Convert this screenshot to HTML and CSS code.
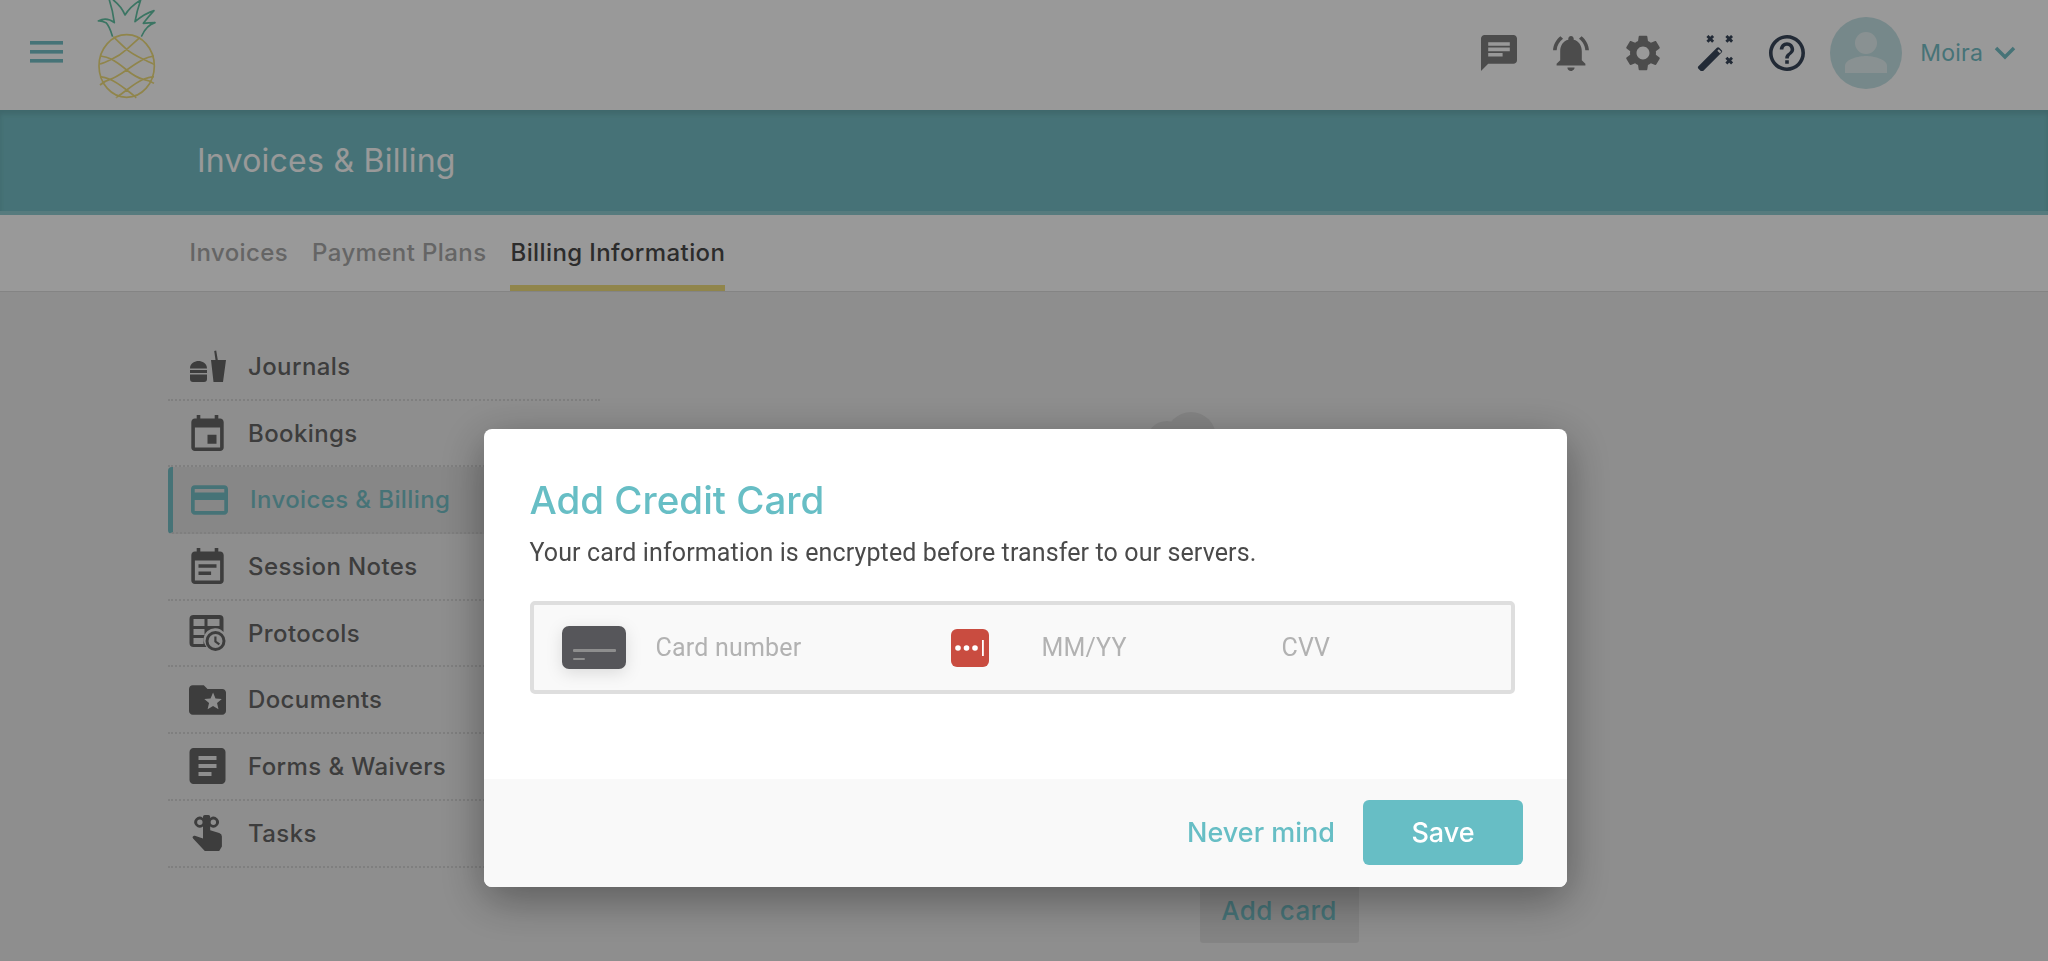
FILE: index.html
```html
<!DOCTYPE html>
<html lang="en">
<head>
<meta charset="utf-8">
<title>Invoices &amp; Billing</title>
<link rel="stylesheet" href="styles.css">
</head>
<body>
<div class="page">
  <header class="topbar">
    <div class="brand">
      <svg class="menu-icon" viewBox="0 0 33 22"><rect width="33" height="3.6" y="0"/><rect width="33" height="3.6" y="9"/><rect width="33" height="3.6" y="18"/></svg>
      <svg class="logo" viewBox="0 0 270 315">
        <path class="logo-crown" d="M97 108Q88 78 78 68Q65 62 55 63Q80 50 103 68Q98 30 88 0M100 0Q125 20 135 45Q150 20 182 0Q170 35 165 65Q195 40 222 32Q205 50 190 70Q205 68 225 68Q200 75 185 108"/>
        <g class="logo-fruit"><ellipse cx="140" cy="198" rx="83" ry="94"/><path d="M100 110Q125 135 140 148T190 178T222 192M62 168Q80 170 95 178T140 210T190 238T222 250M60 230Q75 232 90 238T140 270T165 292M180 112Q160 130 140 148T95 178T60 192M222 168Q205 170 190 178T140 210T90 238T60 255M222 230Q205 232 190 238T140 270T110 292"/></g>
      </svg>
    </div>
    <nav class="top-actions">
      <svg class="act act-dark" viewBox="2 2 20 20"><path d="M20 2H4c-1.1 0-1.99.9-1.99 2L2 22l4-4h14c1.1 0 2-.9 2-2V4c0-1.1-.9-2-2-2zM6 9h12v2H6V9zm8 5H6v-2h8v2zm4-6H6V6h12v2z"/></svg>
      <svg class="act act-dark" viewBox="2 2 20 20"><path d="M7.58 4.08L6.15 2.65C3.75 4.48 2.17 7.3 2.03 10.5h2c.15-2.65 1.51-4.97 3.55-6.42zm12.39 6.42h2c-.15-3.2-1.73-6.02-4.12-7.85l-1.42 1.43c2.02 1.45 3.39 3.77 3.54 6.42zM18 11c0-3.07-1.64-5.64-4.5-6.32V4c0-.83-.67-1.5-1.5-1.5s-1.5.67-1.5 1.5v.68C7.63 5.36 6 7.92 6 11v5l-2 2v1h16v-1l-2-2v-5zm-6 11c.14 0 .27-.01.4-.04.65-.14 1.18-.58 1.44-1.18.1-.24.15-.5.15-.78h-4c.01 1.1.9 2 2.01 2z"/></svg>
      <svg class="act act-dark" viewBox="2.5 2 19 20"><path d="M19.14 12.94c.04-.3.06-.61.06-.94 0-.32-.02-.64-.07-.94l2.03-1.58c.18-.14.23-.41.12-.61l-1.92-3.32c-.12-.22-.37-.29-.59-.22l-2.39.96c-.5-.38-1.03-.7-1.62-.94l-.36-2.54c-.04-.24-.24-.41-.48-.41h-3.84c-.24 0-.43.17-.47.41l-.36 2.54c-.59.24-1.13.57-1.62.94l-2.39-.96c-.22-.08-.47 0-.59.22L2.74 8.87c-.12.21-.08.47.12.61l2.03 1.58c-.05.3-.09.63-.09.94s.02.64.07.94l-2.03 1.58c-.18.14-.23.41-.12.61l1.92 3.32c.12.22.37.29.59.22l2.39-.96c.5.38 1.03.7 1.62.94l.36 2.54c.05.24.24.41.48.41h3.84c.24 0 .44-.17.47-.41l.36-2.54c.59-.24 1.13-.56 1.62-.94l2.39.96c.22.08.47 0 .59-.22l1.92-3.32c.12-.22.07-.47-.12-.61l-2.01-1.58zM12 15.6c-1.98 0-3.6-1.62-3.6-3.6s1.62-3.6 3.6-3.6 3.6 1.62 3.6 3.6-1.62 3.6-3.6 3.6z"/></svg>
      <svg class="act act-navy" viewBox="0 0 38 38"><path d="M1.5 33 21 13.5a1.8 1.8 0 0 1 2.5 0l2.5 2.5a1.8 1.8 0 0 1 0 2.5L6.5 38a1.8 1.8 0 0 1-2.5 0L1.500 35.500a1.800 1.800 0 0 1 0-2.500zM21.500 16.500l2.700 2.700 1.500-1.500-2.700-2.700z" fill-rule="evenodd"/><path class="spark" d="M11 1l6 6m0-6-6 6M31 1l6 6m0-6-6 6M31 24l6 6m0-6-6 6"/></svg>
      <svg class="act act-navy" viewBox="2 2 20 20"><path d="M11 18h2v-2h-2v2zm1-16C6.48 2 2 6.48 2 12s4.48 10 10 10 10-4.48 10-10S17.52 2 12 2zm0 18c-4.41 0-8-3.59-8-8s3.59-8 8-8 8 3.59 8 8-3.59 8-8 8zm0-14c-2.21 0-4 1.790-4 4h2c0-1.100.9-2 2-2s2 .9 2 2c0 2-3 1.750-3 5h2c0-2.250 3-2.500 3-5 0-2.210-1.790-4-4-4z"/></svg>
      <div class="user">
        <svg class="avatar" viewBox="0 0 72 72"><circle class="avatar-bg" cx="36" cy="36" r="36"/><circle class="avatar-fg" cx="36" cy="26" r="11"/><path class="avatar-fg" d="M15 56v-7c0-7 14-10 21-10s21 3 21 10v7z"/></svg>
        <span class="user-name">Moira</span>
        <svg class="chev" viewBox="0 0 22 14"><path d="M2 2l9 9 9-9"/></svg>
      </div>
    </nav>
  </header>

  <div class="banner"><h1 class="banner-title">Invoices &amp; Billing</h1></div>

  <nav class="tabs">
    <a class="tab">Invoices</a>
    <a class="tab">Payment Plans</a>
    <a class="tab tab-active">Billing Information</a>
  </nav>

  <main class="main">
    <ul class="side">
      <li class="side-item">
        <svg class="side-icon" viewBox="0 0 37 32"><path d="M1 18.500C1 13 6 11 9.500 11S18 13 18 18.500zM1 20h17v3H1zM1 24.500h17V29a3 3 0 0 1-3 3H4a3 3 0 0 1-3-3z"/><path d="M22 10h4.500L25.200 1l2-.5L28.800 10H37l-3 22h-9.500z"/></svg>
        <span>Journals</span>
      </li>
      <li class="side-item">
        <svg class="side-icon" viewBox="3 1 18 20"><path d="M17 12h-5v5h5v-5zM16 1v2H8V1H6v2H5c-1.110 0-1.990.9-1.990 2L3 19c0 1.100.89 2 2 2h14c1.100 0 2-.9 2-2V5c0-1.100-.9-2-2-2h-1V1h-2zm3 18H5V8h14v11z"/></svg>
        <span>Bookings</span>
      </li>
      <li class="side-item side-active">
        <svg class="side-icon" viewBox="2 4 20 16"><path d="M20 4H4c-1.110 0-1.990.89-1.990 2L2 18c0 1.110.89 2 2 2h16c1.110 0 2-.89 2-2V6c0-1.110-.89-2-2-2zm0 14H4v-6h16v6zm0-10H4V6h16v2z"/></svg>
        <span>Invoices &amp; Billing</span>
      </li>
      <li class="side-item">
        <svg class="side-icon" viewBox="3 1 18 20"><path d="M17 10H7v2h10v-2zm2-7h-1V1h-2v2H8V1H6v2H5c-1.110 0-1.990.9-1.990 2L3 19c0 1.100.89 2 2 2h14c1.100 0 2-.9 2-2V5c0-1.100-.9-2-2-2zm0 16H5V8h14v11zm-5-5H7v2h7v-2z"/></svg>
        <span>Session Notes</span>
      </li>
      <li class="side-item">
        <svg class="side-icon" viewBox="0 0 36 36"><path fill-rule="evenodd" d="M4 0h26a4 4 0 0 1 4 4v13a11 11 0 0 0-17 15H4a4 4 0 0 1-4-4V4a4 4 0 0 1 4-4zM4 4v7h11V4zM18 4v7h12V4zM4 14v6h11v-6zM4 23v6h10v-6z"/><path fill-rule="evenodd" d="M26 16a10 10 0 1 1 0 20 10 10 0 0 1 0-20zm0 3a7 7 0 1 0 0 14 7 7 0 0 0 0-14zm-1.200 2.500h2.200V26l3.500 2.500-1.300 1.700-4.400-3.200z"/></svg>
        <span>Protocols</span>
      </li>
      <li class="side-item">
        <svg class="side-icon" viewBox="2 4 20 16"><path d="M20 6h-8l-2-2H4c-1.100 0-1.990.9-1.990 2L2 18c0 1.100.9 2 2 2h16c1.100 0 2-.9 2-2V8c0-1.100-.9-2-2-2zm-2.060 11L15 15.280 12.060 17l.78-3.330-2.590-2.240 3.410-.29L15 8l1.340 3.140 3.410.29-2.590 2.240.78 3.330z"/></svg>
        <span>Documents</span>
      </li>
      <li class="side-item">
        <svg class="side-icon" viewBox="3 3 18 18"><path d="M19 3H5c-1.100 0-2 .9-2 2v14c0 1.100.9 2 2 2h14c1.100 0 2-.9 2-2V5c0-1.100-.9-2-2-2zm-5 14H7.500v-2H14v2zm2.500-4h-9v-2h9v2zm0-4h-9V7h9v2z"/></svg>
        <span>Forms &amp; Waivers</span>
      </li>
      <li class="side-item">
        <svg class="side-icon" viewBox="0 0 34 40"><path fill-rule="evenodd" d="M14 0h4a2 2 0 0 1 2 2v1.200a6 6 0 1 1 0 9.600V17l10 3a4 4 0 0 1 3 4v11l-3 5H14L1 26c-1.500-1.500 0-3 2-3l9 3V12.800a6 6 0 1 1 0-9.600V2a2 2 0 0 1 2-2zM8.500 5a3 3 0 1 0 0 6 3 3 0 0 0 0-6zm15 0a3 3 0 1 0 0 6 3 3 0 0 0 0-6z"/></svg>
        <span>Tasks</span>
      </li>
    </ul>
    <section class="content">
      <svg class="cloud" viewBox="0 0 260 180"><circle cx="18" cy="30" r="21"/><circle cx="42" cy="25" r="25"/><rect y="20" width="260" height="160"/></svg>
      <button class="add-card">Add card</button>
    </section>
  </main>
</div>

<div class="overlay">
  <div class="modal">
    <div class="modal-body">
      <h2 class="modal-title">Add Credit Card</h2>
      <p class="modal-text">Your card information is encrypted before transfer to our servers.</p>
      <div class="card-field">
        <svg class="card-icon" viewBox="0 0 64 43"><rect class="card-bg" width="64" height="43" rx="7"/><rect class="card-line" x="11" y="23" width="43" height="3" rx="1"/><rect class="card-line" x="11" y="32" width="12" height="2" rx="1"/></svg>
        <span class="ph ph-number">Card number</span>
        <svg class="lp-icon" viewBox="0 0 38 38"><rect class="lp-bg" width="38" height="38" rx="6"/><circle class="lp-dot" cx="7" cy="19" r="2.800"/><circle class="lp-dot" cx="15.500" cy="19" r="2.800"/><circle class="lp-dot" cx="24" cy="19" r="2.800"/><rect class="lp-dot" x="31" y="11" width="1.800" height="16"/></svg>
        <span class="ph ph-exp">MM/YY</span>
        <span class="ph ph-cvv">CVV</span>
      </div>
    </div>
    <div class="modal-foot">
      <button class="btn-link">Never mind</button>
      <button class="btn-save">Save</button>
    </div>
  </div>
</div>
</body>
</html>
```
FILE: styles.css
```css
* { box-sizing: border-box; }
html, body { margin: 0; height: 961px; overflow: hidden; }
body { background: #ededed; font-family: "Inter", "Liberation Sans", sans-serif; }
.page { height: 961px; overflow: hidden; display: flex; flex-direction: column; }

.topbar { height: 110px; flex: none; background: #fff; display: flex; justify-content: space-between; align-items: center; padding: 0 32px 0 30px; }
.brand { display: flex; align-items: center; gap: 37px; height: 110px; }
.menu-icon { width: 33px; height: 22px; fill: #75c0c7; margin-top: -6px; }
.logo { width: 90px; height: 105px; margin: -5px 0 0 -20px; }
.logo-crown { fill: none; stroke: #63c3a5; stroke-width: 5; stroke-linejoin: round; stroke-linecap: round; }
.logo-fruit { fill: none; stroke: #f0de7d; stroke-width: 5; }
.top-actions { display: flex; align-items: center; margin-top: -5px; }
.act { width: 36px; height: 36px; margin-right: 36px; }
.act-dark { fill: #7f7f7f; }
.act-navy { fill: #39475a; }
.spark { fill: none; stroke: #39475a; stroke-width: 3; }
.user { display: flex; align-items: center; margin-left: -11px; }
.avatar { width: 72px; height: 72px; }
.avatar-bg { fill: #c5e3e6; }
.avatar-fg { fill: #fff; opacity: .55; }
.user-name { font-size: 23px; letter-spacing: .2px; color: #75c0c7; margin: 0 11px 0 18px; }
.chev { width: 22px; height: 14px; fill: none; stroke: #75c0c7; stroke-width: 3.500; }

.banner { height: 105px; flex: none; background: #75bfc6; border-bottom: 4px solid #8fcdd3; box-shadow: inset 0 4px 5px rgba(0,0,0,.1); display: flex; align-items: center; padding-left: 197px; }
.banner-title { margin: 0; font-size: 32px; letter-spacing: .25px; font-weight: 400; color: #fff; }

.tabs { height: 77px; flex: none; background: #fff; border-bottom: 1px solid #dcdcdc; display: flex; padding-left: 189.500px; gap: 24px; }
.tab { font-size: 24px; letter-spacing: .4px; font-weight: 500; color: #a8a8a8; padding-top: 23px; height: 76px; }
.tab-active { color: #4a4a4a; border-bottom: 6px solid #f0de7d; }

.main { flex: 1; display: flex; padding: 42px 90px 0 168px; }
.side { list-style: none; margin: 0; padding: 0; width: 432px; flex: none; }
.side-item { height: 66.700px; display: flex; align-items: center; font-size: 24px; letter-spacing: .4px; font-weight: 500; color: #666; border-bottom: 2px dotted #d4d4d4; padding-left: 21px; gap: 22px; }
.side-icon { width: 37px; height: 36px; fill: #666; flex: none; }
.side-active { background: #e1e1e1; color: #75c0c7; border-left: 5px solid #75c0c7; border-radius: 4px 0 0 4px; padding-left: 18px; }
.side-active .side-icon { fill: #75c0c7; }

.content { flex: 1; display: flex; flex-direction: column; align-items: center; padding-top: 78px; }
.cloud { width: 260px; height: 180px; fill: #dcdcdc; flex: none; }
.add-card { margin-top: 285px; height: 66px; width: 159px; flex: none; border: 0; border-radius: 3px; background: #dcdcdc; color: #75c0c7; font: 500 26px "Inter", sans-serif; letter-spacing: .3px; }

.overlay { position: fixed; inset: 0; background: rgba(0,0,0,.4); display: flex; justify-content: center; align-items: flex-start; padding: 429px 0 0 3px; }
.modal { width: 1083px; height: 458px; background: #fff; border-radius: 8px; overflow: hidden; box-shadow: 0 12px 45px rgba(0,0,0,.38); display: flex; flex-direction: column; }
.modal-body { height: 350px; flex: none; padding: 49px 52px 0 45.500px; }
.modal-title { margin: 0; font-size: 38.500px; font-weight: 500; line-height: 44px; color: #67bec5; }
.modal-text { margin: 15px 0 0; font: 400 25px/32px "Roboto", sans-serif; letter-spacing: .12px; color: #4a4a4a; }
.card-field { margin-top: 32px; height: 93px; border: 4px solid #dedede; border-radius: 5px; background: #f9f9f9; display: flex; align-items: center; padding-left: 28px; font: 400 25px "Roboto", sans-serif; letter-spacing: .2px; }
.card-icon { width: 64px; height: 43px; flex: none; filter: drop-shadow(0 4px 8px rgba(0,0,0,.12)); }
.card-bg { fill: #56565a; }
.card-line { fill: #8e8e8e; }
.ph { color: #b2b2b2; flex: none; }
.ph-number { margin-left: 30px; width: 295px; }
.lp-icon { width: 38px; height: 38px; flex: none; }
.lp-bg { fill: #c94c40; }
.lp-dot { fill: #fff; }
.ph-exp { margin-left: 53px; width: 240px; }
.modal-foot { flex: 1; background: #f9f9f9; display: flex; justify-content: flex-end; align-items: center; padding: 0 44px 2px 0; gap: 28px; }
.btn-link { border: 0; background: none; padding: 0; font: 500 27px "Inter", sans-serif; color: #67bec5; }
.btn-save { width: 160px; height: 65px; border: 0; border-radius: 6px; background: #67bec5; color: #fff; font: 500 27px "Inter", sans-serif; }
```
